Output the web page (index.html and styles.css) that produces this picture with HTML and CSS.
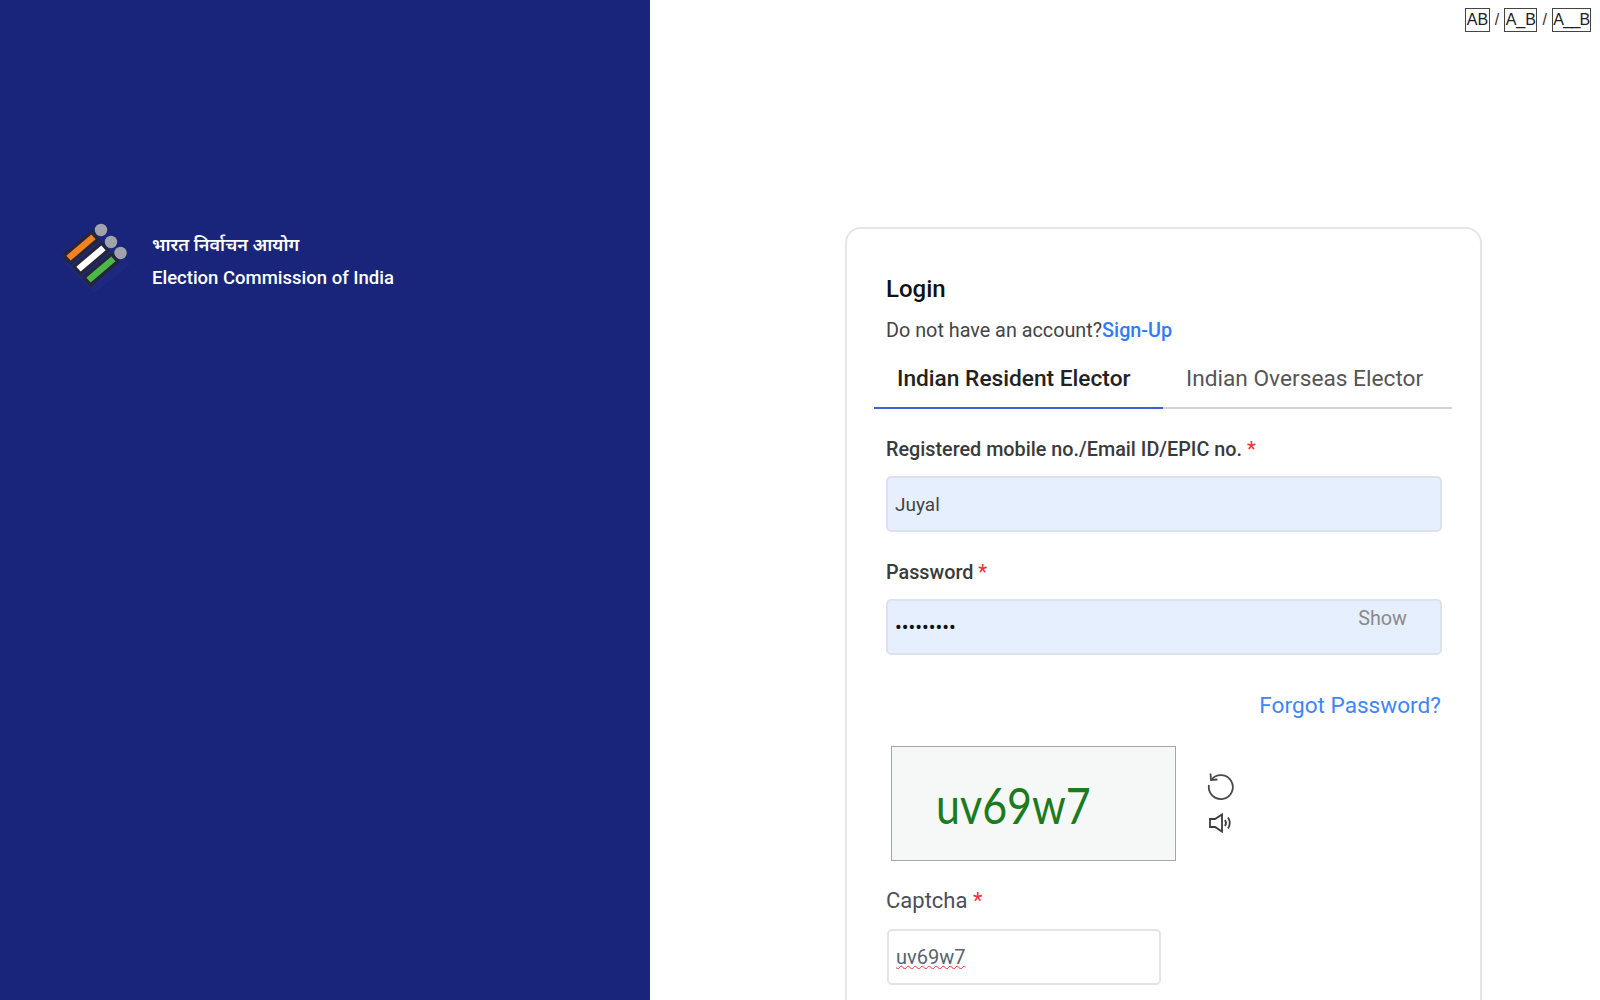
FILE: index.html
```html
<!DOCTYPE html>
<html>
<head>
    <title>Login</title>
    <link rel="stylesheet" href="styles.css">
</head>

<body>
    <div class="page">
        <div class="side">
            <div class="brand">
                <svg class="logo" width="90" height="80" viewBox="0 0 90 80">
                    <path d="M14 48 L44 78 L80 50 L48 20 Z" fill="#1f2a80" opacity="0.7"/>
                    <circle cx="51" cy="15" r="6.2" fill="#a0a3ab"/>
                    <circle cx="61" cy="27" r="6.2" fill="#a0a3ab"/>
                    <circle cx="70.500" cy="38" r="6.2" fill="#a0a3ab"/>
                    <g stroke-linecap="square">
                        <path d="M21 41 L41 24" stroke="#26263a" stroke-width="13"/>
                        <path d="M31 52 L51 35" stroke="#26263a" stroke-width="13"/>
                        <path d="M41 63 L61 46" stroke="#26263a" stroke-width="13"/>
                        <path d="M21 41 L41 24" stroke="#f58220" stroke-width="6.500"/>
                        <path d="M31 52 L51 35" stroke="#ffffff" stroke-width="6.500"/>
                        <path d="M41 63 L61 46" stroke="#4cb848" stroke-width="6.500"/>
                    </g>
                </svg>
                <div class="brand-text">
                    <div class="brand-hindi">भारत निर्वाचन आयोग</div>
                    <div class="brand-english">Election Commission of India</div>
                </div>
            </div>
        </div>

        <div class="main">
            <div class="font-size">
                <span class="size-box">AB</span> / <span class="size-box">A_B</span> / <span class="size-box size-box-wide">A__B</span>
            </div>

            <div class="card">
                <h1 class="title">Login</h1>
                <p class="signup">Do not have an account?<a class="signup-link" href="#">Sign-Up</a></p>

                <div class="tabs">
                    <div class="tab tab-active">Indian Resident Elector</div>
                    <div class="tab">Indian Overseas Elector</div>
                </div>

                <label class="field-label">Registered mobile no./Email ID/EPIC no. <span class="star">*</span></label>
                <input class="field field-filled" type="text" value="Juyal">

                <label class="field-label label-password">Password <span class="star">*</span></label>
                <div class="password-wrap">
                    <input class="field field-filled field-dots" type="password" value="123456789">
                    <span class="show">Show</span>
                </div>

                <div class="forgot-row"><a class="forgot" href="#">Forgot Password?</a></div>

                <div class="captcha-row">
                    <div class="captcha-image"><span class="captcha-text">uv69w7</span></div>
                    <div class="captcha-icons">
                        <svg width="30" height="30" viewBox="0 0 30 30" fill="none" stroke="#4a4a4a" stroke-width="1.800">
                            <path d="M5.500 9.500 A12 12 0 1 1 3 15"/>
                            <path d="M4.500 3.500 L5 10 L11.500 9.500"/>
                        </svg>
                        <svg width="26" height="22" viewBox="0 0 26 22" fill="none" stroke="#3c3c3c" stroke-width="1.800">
                            <path d="M2 7 H7 L14 2.500 V19.500 L7 15 H2 Z"/>
                            <path d="M17 8 Q19 11 17 14"/>
                            <path d="M20 5.500 Q23.500 11 20 16.500"/>
                        </svg>
                    </div>
                </div>

                <label class="captcha-label">Captcha <span class="star">*</span></label>
                <input class="field field-captcha" type="text" value="uv69w7">
            </div>
        </div>
    </div>
</body>

</html>
```

FILE: styles.css
```css
* {
    box-sizing: border-box;
}

html,
body {
    margin: 0;
    height: 1000px;
    overflow: hidden;
    background: #fff;
}

body {
    font-family: Roboto, "Liberation Sans", sans-serif;
    color: #212529;
}

.page {
    display: flex;
    height: 1000px;
    overflow: hidden;
}

.side {
    width: 650px;
    background: #19257a;
    padding: 215px 0 0 50px;
}

.brand {
    display: flex;
    gap: 12px;
}

.logo {
    display: block;
}

.brand-text {
    padding-top: 15px;
    color: #fff;
}

.brand-hindi {
    font-family: "Noto Sans", "Liberation Serif", serif;
    font-size: 18px;
    font-weight: 600;
    line-height: 28px;
}

.brand-english {
    margin-top: 6px;
    font-size: 18.500px;
    font-weight: 500;
    line-height: 28px;
}

.main {
    flex: 1;
    padding-left: 195px;
}

.font-size {
    display: flex;
    justify-content: flex-end;
    align-items: center;
    gap: 5px;
    height: 40px;
    padding-right: 9px;
    font-family: "Liberation Sans", sans-serif;
    font-size: 16px;
    color: #333;
}

.size-box {
    border: 1px solid #444;
    padding: 2px 0.500px;
    line-height: 18px;
    color: #222;
}

.size-box-wide {
    letter-spacing: -0.750px;
}

.card {
    width: 637px;
    height: 900px;
    margin-top: 187px;
    padding: 0 39px;
    border: 2px solid #e6e6e6;
    border-radius: 16px;
}

.title {
    margin: 45px 0 0;
    font-size: 24px;
    font-weight: 500;
    line-height: 30px;
    color: #111;
}

.signup {
    margin: 15px 0 0;
    font-size: 19.800px;
    line-height: 24px;
    color: #444;
}

.signup-link {
    color: #2f7df6;
    font-weight: 500;
    text-decoration: none;
}

.tabs {
    display: flex;
    margin: 9px -11px 0 -12px;
    border-bottom: 2px solid #d4d4d4;
}

.tab {
    width: 50%;
    padding: 12px 0 13px 23px;
    font-size: 22.700px;
    line-height: 30px;
    color: #555;
}

.tab-active {
    margin-bottom: -2px;
    border-bottom: 2px solid #3f5fd0;
    font-weight: 500;
    color: #222;
}

.field-label {
    display: block;
    margin-top: 28px;
    font-size: 19.800px;
    font-weight: 500;
    line-height: 26px;
    color: #3a3a3a;
}

.star {
    color: #f0323c;
}

.field {
    display: block;
    height: 56px;
    padding: 0 7px;
    border: 2px solid #dde2ea;
    border-radius: 5px;
    font-family: Roboto, sans-serif;
    font-size: 19px;
    color: #444;
    outline: none;
}

.field-filled {
    width: 556px;
    margin-top: 13px;
    background: #e6effd;
}

.field-dots {
    font-size: 20px;
    color: #111;
}

.password-wrap {
    position: relative;
}

.show {
    position: absolute;
    top: 8px;
    right: 34px;
    font-size: 19.800px;
    line-height: 24px;
    color: #8a8a8a;
}

.forgot-row {
    display: flex;
    justify-content: flex-end;
    margin-top: 36px;
}

.forgot {
    font-size: 22.600px;
    line-height: 30px;
    color: #3f86f4;
    text-decoration: none;
}

.captcha-row {
    display: flex;
    align-items: center;
    margin: 25px 0 0 5px;
}

.captcha-image {
    width: 285px;
    height: 115px;
    padding: 23px 0 0 44px;
    border: 1px solid #a5a5a5;
    background: #f6f8f7;
    font-family: Lato, sans-serif;
    font-size: 50px;
    line-height: 70px;
    color: #1c7a20;
}

.captcha-text {
    display: inline-block;
    transform: scaleX(0.860);
    transform-origin: left center;
}

.captcha-icons {
    display: flex;
    flex-direction: column;
    align-items: center;
    gap: 12px;
    margin: -3px 0 0 30px;
}

.captcha-label {
    display: block;
    margin-top: 25px;
    font-size: 22px;
    line-height: 30px;
    color: #4a4f57;
}

.field-captcha {
    width: 274px;
    margin: 13px 0 0 1px;
    border-color: #e4e4e4;
    background: #fff;
    font-size: 20px;
    color: #5a6270;
    text-decoration: underline wavy #e8323c;
    text-decoration-thickness: 1px;
}
```
